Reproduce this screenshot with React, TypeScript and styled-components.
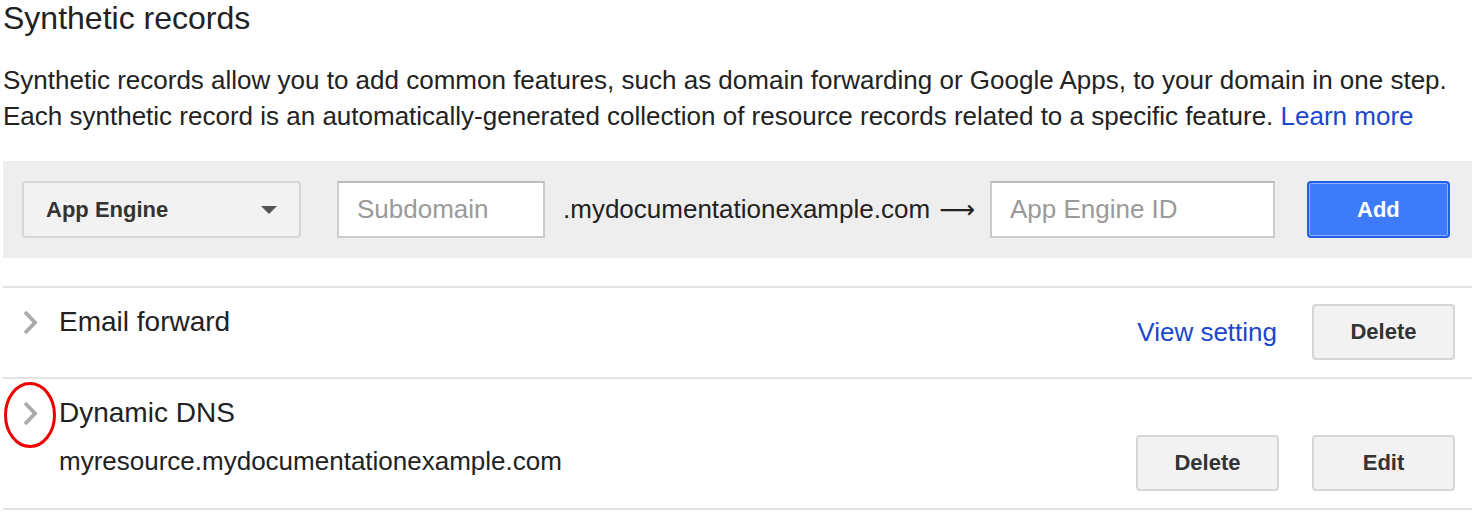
import React from 'react'
import styled, { createGlobalStyle } from 'styled-components'

const GlobalStyle = createGlobalStyle`
    html, body {
        margin: 0;
        padding: 0;
        background: #ffffff;
    }
    body {
        font-family: 'Liberation Sans', Arial, sans-serif;
        color: #222222;
    }
`

const Page = styled.div`
    width: 1469px;
    padding-left: 3px;
`

const Title = styled.h2`
    margin: 0;
    font-size: 32px;
    font-weight: 400;
    line-height: 36px;
    color: #222222;
`

const Description = styled.p`
    margin: 26px 0 0;
    font-size: 26px;
    line-height: 36px;
    color: #222222;
    white-space: nowrap;
`

const Link = styled.a`
    color: #1a46d0;
    text-decoration: none;
    cursor: pointer;
`

const Panel = styled.div`
    margin-top: 27px;
    background: #eeeeee;
    padding: 20px 19px;
    display: flex;
    align-items: center;
    & > * {
        flex-shrink: 0;
    }
`

const Select = styled.div`
    width: 279px;
    height: 57px;
    box-sizing: border-box;
    border: 2px solid #d6d6d6;
    border-radius: 4px;
    background: #f2f2f2;
    display: flex;
    align-items: center;
    justify-content: space-between;
    padding: 0 22px 0 22px;
    font-size: 22px;
    font-weight: 700;
    color: #333333;
    margin-right: 36px;
`

const Caret = styled.span`
    width: 0;
    height: 0;
    border-left: 8px solid transparent;
    border-right: 8px solid transparent;
    border-top: 8px solid #555555;
`

const Input = styled.input<{ $width: number }>`
    width: ${(p) => p.$width}px;
    height: 57px;
    box-sizing: border-box;
    border: 2px solid #cccccc;
    border-top-color: #bdbdbd;
    border-radius: 0;
    background: #ffffff;
    padding: 0 18px;
    font-family: inherit;
    font-size: 26px;
    color: #222222;
    outline: none;
    &::placeholder {
        color: #9a9a9a;
    }
`

const Domain = styled.span`
    display: flex;
    align-items: center;
    font-size: 26px;
    color: #222222;
    white-space: nowrap;
    margin: 0 15px 0 18px;
`

const Arrow = styled.span`
    font-family: 'DejaVu Sans', sans-serif;
    font-size: 25px;
    margin-left: 9px;
`

const Button = styled.button<{ $primary?: boolean }>`
    width: 143px;
    height: 56px;
    box-sizing: border-box;
    border-radius: 4px;
    font-family: inherit;
    font-size: 22px;
    font-weight: 700;
    cursor: pointer;
    border: 2px solid ${(p) => (p.$primary ? '#2160e6' : '#d6d6d6')};
    background: ${(p) => (p.$primary ? '#3d7bfa' : '#f2f2f2')};
    color: ${(p) => (p.$primary ? '#ffffff' : '#333333')};
    box-shadow: ${(p) => (p.$primary ? 'inset 0 0 0 1px #8fb2ff' : 'none')};
`

const AddButton = styled(Button)`
    height: 57px;
    margin-left: 32px;
`

const List = styled.div`
    margin-top: 28px;
    border-bottom: 2px solid #e3e3e3;
`

const Row = styled.div`
    position: relative;
    display: flex;
    justify-content: space-between;
    border-top: 2px solid #e3e3e3;
    padding: 16px 17px 17px 19px;
`

const Info = styled.div`
    display: flex;
    align-items: flex-start;
`

const Chevron = styled.svg`
    width: 16px;
    height: 36px;
    margin-right: 21px;
    flex-shrink: 0;
`

const Name = styled.div`
    font-size: 28px;
    line-height: 36px;
    color: #222222;
`

const Sub = styled.div`
    font-size: 26px;
    line-height: 36px;
    margin: 12px 0 12px;
    color: #222222;
`

const Actions = styled.div<{ $align: 'center' | 'flex-end' }>`
    display: flex;
    align-items: center;
    align-self: ${(p) => p.$align};
    gap: 33px;
`

const ActionLink = styled(Link)`
    font-size: 26px;
    margin-right: 2px;
`

const Mark = styled.svg`
    position: absolute;
    left: 0;
    top: 2px;
    width: 56px;
    height: 70px;
    pointer-events: none;
`

function ChevronIcon(): JSX.Element {
    return (
        <Chevron viewBox="0 0 16 36">
            <path d="M3 8 L13 18.5 L3 29" fill="none" stroke="#aaaaaa" strokeWidth="3.8" />
        </Chevron>
    )
}

export default function App(): JSX.Element {
    return (
        <Page>
            <GlobalStyle />
            <Title>Synthetic records</Title>
            <Description>
                Synthetic records allow you to add common features, such as domain forwarding or Google Apps, to your
                domain in one step.
                <br />
                Each synthetic record is an automatically-generated collection of resource records related to a specific
                feature. <Link>Learn more</Link>
            </Description>

            <Panel>
                <Select>
                    App Engine
                    <Caret />
                </Select>
                <Input $width={208} placeholder="Subdomain" />
                <Domain>
                    .mydocumentationexample.com<Arrow>⟶</Arrow>
                </Domain>
                <Input $width={285} placeholder="App Engine ID" />
                <AddButton $primary>Add</AddButton>
            </Panel>

            <List>
                <Row>
                    <Info>
                        <ChevronIcon />
                        <Name>Email forward</Name>
                    </Info>
                    <Actions $align="center">
                        <ActionLink>View setting</ActionLink>
                        <Button>Delete</Button>
                    </Actions>
                </Row>
                <Row>
                    <Mark viewBox="0 0 56 70">
                        <ellipse cx="27" cy="34" rx="24.5" ry="31.5" fill="none" stroke="#ee0000" strokeWidth="3" />
                    </Mark>
                    <Info>
                        <ChevronIcon />
                        <div>
                            <Name>Dynamic DNS</Name>
                            <Sub>myresource.mydocumentationexample.com</Sub>
                        </div>
                    </Info>
                    <Actions $align="flex-end">
                        <Button>Delete</Button>
                        <Button>Edit</Button>
                    </Actions>
                </Row>
            </List>
        </Page>
    )
}
